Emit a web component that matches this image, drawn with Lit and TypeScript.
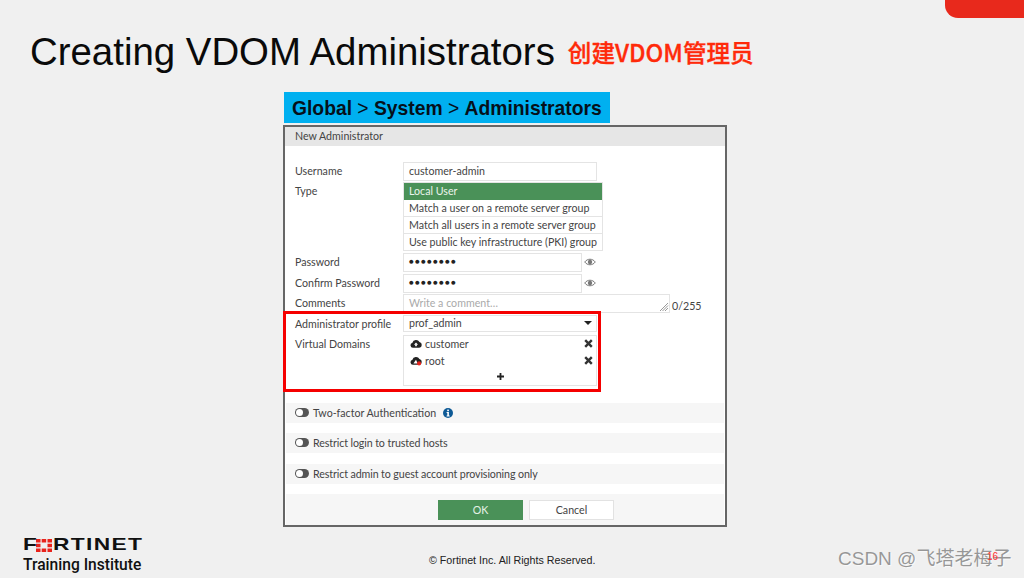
import { LitElement, html, css, svg } from "lit";
import { customElement } from "lit/decorators.js";

const cloud = (dot: boolean) => html`<svg class="cloud" viewBox="0 0 14 12" width="12" height="11">
  <path fill="#222" d="M3.4 11A3 3 0 0 1 2.8 5.1 4.4 4.4 0 0 1 11 4.3 3.4 3.4 0 0 1 10.8 11Z"/>
  ${dot
    ? svg`<path fill="#fff" d="M4 9.5 7 5 9 9.5Z"/><circle cx="10.6" cy="9.4" r="2.4" fill="#e8231c"/>`
    : svg`<path fill="#fff" d="M4.6 7.6 7 4.8 9.4 7.6Z"/><rect x="6" y="7" width="2" height="2.2" fill="#fff"/>`}
</svg>`;

const cross = html`<svg class="x" viewBox="0 0 9 9" width="9" height="9"><path d="M1.2 1.2 7.8 7.8M7.8 1.2 1.2 7.8" stroke="#333" stroke-width="2.4"/></svg>`;

const eye = html`<svg class="eye" viewBox="0 0 12 8" width="12" height="8">
  <path fill="none" stroke="#777" d="M.7 4C3.5.3 8.5.3 11.3 4 8.5 7.7 3.5 7.7.7 4Z"/>
  <circle cx="6" cy="4" r="2.2" fill="#777"/>
</svg>`;

@customElement("app-root")
export class AppRoot extends LitElement {
  static styles = css`
    :host { display: block; width: 1024px; height: 578px; overflow: hidden; }
    * { box-sizing: border-box; }
    .slide {
      position: relative; width: 1024px; height: 578px; overflow: hidden;
      background: #f0f0f0; font-family: "Liberation Sans", Arial, sans-serif; color: #000;
    }
    .tab {
      position: absolute; top: 0; right: 0; width: 79px; height: 18px;
      background: #e8291c; border-bottom-left-radius: 13px;
    }
    .titlerow { display: flex; align-items: baseline; height: 92px; padding: 28px 0 0 30px; }
    h1 { margin: 0; font-size: 38.4px; font-weight: 400; line-height: 48px; color: #0a0a0a; white-space: nowrap; }
    .cn {
      margin-left: 13px; font-family: "Noto Sans CJK SC", "Liberation Sans", sans-serif;
      font-size: 23.6px; font-weight: 500; color: #ff2a0a; position: relative; top: -3px;
      white-space: nowrap; -webkit-text-stroke: .35px #ff2a0a;
    }
    .path {
      margin-left: 284px; width: 326px; height: 31px; background: #00b0f0;
      padding-left: 8px; font-size: 19.3px; line-height: 33px; white-space: pre; color: #06101a;
    }
    .path b { font-weight: 700; }
    .dialog {
      margin: 2px 0 0 283px; width: 444px; height: 402px;
      border: 2px solid #666; background: #fff;
      font-family: Lato, sans-serif; font-size: 10.65px; color: #444;
      display: flex; flex-direction: column;
    }
    .head { height: 19px; line-height: 18px; background: #e6e6e6; padding-left: 10px; }
    .form { position: relative; padding: 16px 0 0 10px; height: 257px; }
    .row { display: flex; margin-bottom: 1px; }
    .label { width: 108px; flex: none; line-height: 18px; white-space: nowrap; }
    .field {
      border: 1.5px solid #e4e4e4; height: 19px; line-height: 15px; padding: 0 0 2px 5px;
      display: flex; align-items: center; background: #fff; white-space: nowrap;
    }
    .w194 { width: 194px; }
    .w179 { width: 179px; }
    .pw { letter-spacing: 1.2px; font-size: 8px; color: #222; }
    .eye { margin: 5px 0 0 2px; flex: none; }
    .pwrow { margin-bottom: 2px; }
    .pwrow.h18 { margin-bottom: 1px; }
    .types { width: 200px; border: 1.5px solid #e4e4e4; height: 69px; }
    .types div { height: 17px; line-height: 15px; padding-left: 5px; border-bottom: 1.5px solid #e4e4e4; white-space: nowrap; }
    .types div:last-child { border-bottom: 0; }
    .types .on { background: #4a9158; color: #eaf4ec; border-bottom: 0; }
    .rowtype { margin-bottom: 2px; }
    .textarea { width: 267px; position: relative; color: #aaa; }
    .grip { position: absolute; right: 0; bottom: 0; }
    .count { align-self: flex-end; margin: 0 0 1px 2px; line-height: 13px; }
    .row.cm { height: 19px; margin-bottom: 2px; }
    .row.prof { margin-bottom: 2px; }
    .select { width: 194px; height: 17px; justify-content: space-between; padding-right: 4px; }
    .caret { width: 0; height: 0; border: 4px solid transparent; border-top: 4.5px solid #222; border-bottom: 0; }
    .domains { width: 194px; height: 51px; border: 1.5px solid #e4e4e4; padding: 0 3px 0 6px; }
    .dom { display: flex; align-items: center; height: 17px; }
    .dom:first-child { margin-top: -1px; }
    .dom .cloud { margin-right: 3px; flex: none; }
    .dom .x { margin-left: auto; }
    .plus { height: 14px; display: flex; justify-content: center; align-items: center; padding-right: 2px; }
    .mark { position: absolute; left: -2px; top: 165px; width: 318px; height: 81px; border: 3px solid #f50000; pointer-events: none; }
    .section {
      height: 20px; margin: 0 1px 10px; background: #f6f6f6; display: flex; align-items: center; padding: 0 0 1px 9px; white-space: nowrap;
    }
    .section.s2 { margin-bottom: 11px; }
    .section.tight { letter-spacing: -.1px; }
    .toggle { width: 14px; height: 9px; border-radius: 5px; background: #555; position: relative; margin-right: 4px; flex: none; }
    .toggle::after { content: ""; position: absolute; left: 1px; top: 1px; width: 7px; height: 7px; border-radius: 50%; background: #fff; }
    .info { margin-left: 7px; }
    .foot {
      height: 31px; margin: 0 1px; background: #f6f6f6; display: flex; align-items: center; gap: 6px; padding-left: 152px;
    }
    .btn { width: 85px; height: 20px; line-height: 18px; text-align: center; border: 1px solid #e2e2e2; background: #fff; }
    .btn.ok { background: #4a9158; border-color: #4a9158; color: #e4f1e6; }
    .footer { display: flex; padding: 11px 0 0 23px; }
    .logo { width: 119px; }
    .brand { display: flex; align-items: center; height: 14px; font-size: 17px; font-weight: 700; line-height: 14px; color: #111; letter-spacing: 1px; }
    .brand span { display: inline-block; transform-origin: left center; transform: scaleX(1.33); white-space: nowrap; width: 12px; }
    .brand .rest { width: auto; transform: scaleX(1.34); }
    .brand svg { margin: 0 1px; flex: none; }
    .ti { margin-top: 5px; font-family: Roboto, sans-serif; font-size: 15.6px; font-weight: 500; line-height: 16px; white-space: nowrap; color: #111; }
    .copy { margin: 15px 0 0 287px; font-size: 10.7px; line-height: 14px; color: #222; white-space: nowrap; }
    .wm {
      position: absolute; left: 838px; top: 548px; font-size: 19px; line-height: 22px; color: rgba(120,120,120,.75);
      font-family: "Liberation Sans", "Noto Sans CJK SC", sans-serif; white-space: nowrap; text-shadow: 1px 1px 1px rgba(255,255,255,.7);
    }
    .page { position: absolute; left: 987px; top: 551px; font-size: 10px; color: #ff3030; }
  `;

  render() {
    return html`<div class="slide">
      <div class="tab"></div>
      <div class="titlerow">
        <h1>Creating VDOM Administrators</h1>
        <span class="cn">创建VDOM管理员</span>
      </div>
      <div class="path"><b>Global</b> &gt; <b>System</b> &gt; <b>Administrators</b></div>
      <div class="dialog">
        <div class="head">New Administrator</div>
        <div class="form">
          <div class="row"><div class="label">Username</div><div class="field w194">customer-admin</div></div>
          <div class="row rowtype">
            <div class="label">Type</div>
            <div class="types">
              <div class="on">Local User</div>
              <div>Match a user on a remote server group</div>
              <div>Match all users in a remote server group</div>
              <div>Use public key infrastructure (PKI) group</div>
            </div>
          </div>
          <div class="row pwrow"><div class="label">Password</div><div class="field w179 pw">●●●●●●●●</div>${eye}</div>
          <div class="row pwrow h18"><div class="label">Confirm Password</div><div class="field w179 pw">●●●●●●●●</div>${eye}</div>
          <div class="row cm">
            <div class="label">Comments</div>
            <div class="field textarea">Write a comment…
              <svg class="grip" viewBox="0 0 10 10" width="10" height="10"><path d="M9 1 1 9M9 3.5 3.5 9M9 6 6 9" stroke="#999" fill="none"/></svg>
            </div>
            <div class="count">0/255</div>
          </div>
          <div class="row prof">
            <div class="label">Administrator profile</div>
            <div class="field select">prof_admin<i class="caret"></i></div>
          </div>
          <div class="row">
            <div class="label">Virtual Domains</div>
            <div class="domains">
              <div class="dom">${cloud(false)}customer${cross}</div>
              <div class="dom">${cloud(true)}root${cross}</div>
              <div class="plus"><svg viewBox="0 0 7 7" width="7" height="7"><path d="M3.5 0v7M0 3.5h7" stroke="#222" stroke-width="1.8"/></svg></div>
            </div>
          </div>
          <div class="mark"></div>
        </div>
        <div class="section">
          <i class="toggle"></i>Two-factor Authentication
          <svg class="info" viewBox="0 0 10 10" width="10" height="10"><circle cx="5" cy="5" r="5" fill="#0e5a96"/><rect x="4.2" y="1.6" width="1.7" height="1.6" fill="#fff"/><path d="M3.6 4.1h2.3v3.3h.8v1H3.6v-1h.7V5.1h-.7Z" fill="#fff"/></svg>
        </div>
        <div class="section s2 tight"><i class="toggle"></i>Restrict login to trusted hosts</div>
        <div class="section tight"><i class="toggle"></i>Restrict admin to guest account provisioning only</div>
        <div class="foot">
          <div class="btn ok">OK</div>
          <div class="btn">Cancel</div>
        </div>
      </div>
      <div class="footer">
        <div class="logo">
          <div class="brand">
            <span>F</span>
            <svg viewBox="0 0 16 13" width="16" height="13" fill="#e8231c">
              <rect x="0" y="0" width="4.5" height="3.5"/><rect x="5.7" y="0" width="4.5" height="3.5"/><rect x="11.5" y="0" width="4.5" height="3.5"/>
              <rect x="0" y="4.75" width="4.5" height="3.5"/><rect x="11.5" y="4.75" width="4.5" height="3.5"/>
              <rect x="0" y="9.5" width="4.5" height="3.5"/><rect x="5.7" y="9.5" width="4.5" height="3.5"/><rect x="11.5" y="9.5" width="4.5" height="3.5"/>
            </svg>
            <span class="rest">RTINET</span>
          </div>
          <div class="ti">Training Institute</div>
        </div>
        <div class="copy">© Fortinet Inc. All Rights Reserved.</div>
      </div>
      <div class="wm">CSDN @飞塔老梅子</div>
      <div class="page">16</div>
    </div>`;
  }
}
